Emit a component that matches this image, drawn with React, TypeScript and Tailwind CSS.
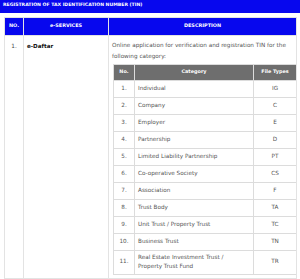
import React from "react";

const rows: [string, string, string][] = [
  ["1.", "Individual", "IG"],
  ["2.", "Company", "C"],
  ["3.", "Employer", "E"],
  ["4.", "Partnership", "D"],
  ["5.", "Limited Liability Partnership", "PT"],
  ["6.", "Co-operative Society", "CS"],
  ["7.", "Association", "F"],
  ["8.", "Trust Body", "TA"],
  ["9.", "Unit Trust / Property Trust", "TC"],
  ["10.", "Business Trust", "TN"],
  ["11.", "Real Estate Investment Trust / Property Trust Fund", "TR"],
];

export default function App() {
  return (
    <div
      className="w-[300px] h-[279px] bg-white overflow-hidden text-[#333] [text-rendering:geometricPrecision]"
      style={{ fontFamily: '"DejaVu Sans", "Liberation Sans", sans-serif' }}
    >
      <div className="h-[13px] bg-[#0707ee] flex items-center pl-[3px] text-white font-bold text-[4.6px] whitespace-nowrap">
        REGISTRATION OF TAX IDENTIFICATION NUMBER (TIN)
      </div>
      <table className="mt-[4px] ml-[4px] w-[292px] border-collapse table-fixed text-[5.7px]">
        <colgroup>
          <col className="w-[19px]" />
          <col className="w-[85px]" />
          <col className="w-[188px]" />
        </colgroup>
        <thead>
          <tr className="h-[18px] bg-[#0707ee] text-white font-bold text-[4.9px]">
            <th className="border border-[#e3e3e3]">NO.</th>
            <th className="border border-[#e3e3e3]">e-SERVICES</th>
            <th className="border border-[#e3e3e3]">DESCRIPTION</th>
          </tr>
        </thead>
        <tbody>
          <tr className="align-top">
            <td className="border border-[#e3e3e3] text-center pt-[7px] text-[#444]">1.</td>
            <td className="border border-[#e3e3e3] pl-[3px] pt-[7px] font-bold text-[#111] text-[5.6px]">e-Daftar</td>
            <td className="border border-[#e3e3e3] pt-[5px] pl-[3px] pr-[1px] pb-[3px]">
              <div className="leading-[11px] text-[#555] text-[5.7px]">
                Online application for verification and registration TIN for the following category:
              </div>
              <table className="mt-[1px] ml-[1px] w-[183px] border-collapse table-fixed">
                <colgroup>
                  <col className="w-[21px]" />
                  <col className="w-[119px]" />
                  <col className="w-[43px]" />
                </colgroup>
                <thead>
                  <tr className="h-[16px] bg-[#6e6e6e] text-white font-bold text-[4.9px]">
                    <th className="border border-[#dcdcdc]">No.</th>
                    <th className="border border-[#dcdcdc]">Category</th>
                    <th className="border border-[#dcdcdc]">File Types</th>
                  </tr>
                </thead>
                <tbody className="text-[#555]">
                  {rows.map(([n, c, f], i) => (
                    <tr key={n} className={i === rows.length - 1 ? "h-[24px]" : "h-[17px]"}>
                      <td className="border border-[#dcdcdc] text-center">{n}</td>
                      <td className="border border-[#dcdcdc] pl-[3px] pr-[4px] leading-[9px]">{c}</td>
                      <td className="border border-[#dcdcdc] text-center">{f}</td>
                    </tr>
                  ))}
                </tbody>
              </table>
            </td>
          </tr>
        </tbody>
      </table>
    </div>
  );
}
